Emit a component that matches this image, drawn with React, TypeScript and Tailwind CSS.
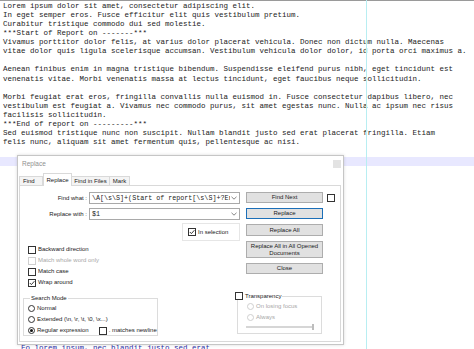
import React from "react";

const lines: string[] = [
  "Lorem ipsum dolor sit amet, consectetur adipiscing elit.",
  "In eget semper eros. Fusce efficitur elit quis vestibulum pretium.",
  "Curabitur tristique commodo dui sed molestie.",
  "***Start of Report on -------***",
  "Vivamus porttitor dolor felis, at varius dolor placerat vehicula. Donec non dictum nulla. Maecenas",
  "vitae dolor quis ligula scelerisque accumsan. Vestibulum vehicula dolor dolor, id porta orci maximus a.",
  "",
  "Aenean finibus enim in magna tristique bibendum. Suspendisse eleifend purus nibh, eget tincidunt est",
  "venenatis vitae. Morbi venenatis massa at lectus tincidunt, eget faucibus neque sollicitudin.",
  "",
  "Morbi feugiat erat eros, fringilla convallis nulla euismod in. Fusce consectetur dapibus libero, nec",
  "vestibulum est feugiat a. Vivamus nec commodo purus, sit amet egestas nunc. Nulla ac ipsum nec risus",
  "facilisis sollicitudin.",
  "***End of report on ---------***",
  "Sed euismod tristique nunc non suscipit. Nullam blandit justo sed erat placerat fringilla. Etiam",
  "felis nunc, aliquam sit amet fermentum quis, pellentesque ac nisi.",
  "",
];

function Check({ checked, disabled }: { checked?: boolean; disabled?: boolean }) {
  return (
    <span
      className={`w-[8px] h-[8px] shrink-0 border bg-white flex items-center justify-center ${
        disabled ? "border-[#cfcfcf]" : "border-[#333333]"
      }`}
    >
      {checked && (
        <svg width="6" height="6" viewBox="0 0 6 6">
          <polyline points="0.8,3 2.4,4.6 5.4,1.2" fill="none" stroke="#222" strokeWidth="0.9" />
        </svg>
      )}
    </span>
  );
}

function Radio({ on, disabled }: { on?: boolean; disabled?: boolean }) {
  return (
    <span
      className={`w-[7px] h-[7px] shrink-0 rounded-full border bg-white flex items-center justify-center ${
        disabled ? "border-[#cfcfcf]" : "border-[#333333]"
      }`}
    >
      {on && <span className="w-[3px] h-[3px] rounded-full bg-[#111]" />}
    </span>
  );
}

function Btn({ label, h, focused }: { label: React.ReactNode; h: string; focused?: boolean }) {
  return (
    <div
      className={`ml-[6px] w-[77px] ${h} bg-[#e1e1e1] border flex items-center justify-center text-center leading-[7px] ${
        focused ? "border-[#1c6fb8]" : "border-[#adadad]"
      }`}
    >
      {label}
    </div>
  );
}

function Combo({ value }: { value: string }) {
  return (
    <div className="ml-[2px] w-[151px] h-[12px] border border-[#a9a9a9] bg-white flex items-center">
      <span className="flex-1 overflow-hidden whitespace-pre pl-[2px] font-['Liberation_Mono',monospace] text-[6.7px] text-[#222]">
        {value}
      </span>
      <svg width="8" height="6" viewBox="0 0 8 6" className="shrink-0 mr-[1px]">
        <polyline points="1.5,1.8 4,4.2 6.5,1.8" fill="none" stroke="#666" strokeWidth="0.8" />
      </svg>
    </div>
  );
}

export default function App() {
  return (
    <div className="relative w-[474px] h-[349px] overflow-hidden bg-white">
      {/* editor */}
      <div className="border-t border-[#9a9a9a] pt-[0.5px] font-['Liberation_Mono',monospace] text-[7.5px] leading-[9.13px] text-[#1c1c1c]">
        {lines.map((l, i) => (
          <div key={i} className="pl-[3px] whitespace-pre h-[9.13px]">
            {l}
          </div>
        ))}
        <div className="h-[9.13px] bg-[#e8e8ff]" />
        {Array.from({ length: 19 }).map((_, i) => (
          <div key={"b" + i} className="h-[9.13px]" />
        ))}
        <div className="mt-[5px] pl-[3px] whitespace-pre h-[9.13px] text-[#2b2ba6]">
          {"    Fo lorem ipsum, nec blandit justo sed erat"}
        </div>
      </div>

      {/* long line marker */}
      <div className="absolute left-[366px] top-0 bottom-0 w-px bg-[#b8eef2]" />

      {/* Replace dialog */}
      <div className="absolute left-[17px] top-[155px] w-[327px] h-[190px] bg-white border border-[#c6c6c6] shadow-[0_0_3px_rgba(0,0,0,0.15)] font-['Liberation_Sans',sans-serif] text-[6px] text-[#1a1a1a] flex flex-col">
        <div className="h-[16px] flex items-center justify-between pl-[4px] pr-[2px] shrink-0">
          <span className="text-[6.5px] text-[#8f8f8f]">Replace</span>
          <span className="w-[8px] h-[8px] bg-[#e3e3e3]" />
        </div>

        {/* tabs */}
        <div className="h-[13px] flex items-end ml-[1px] shrink-0">
          <div className="w-[24px] h-[9px] bg-[#f4f4f4] border border-b-0 border-[#d9d9d9] flex items-center pl-[3px]">
            Find
          </div>
          <div className="w-[29px] h-[13px] bg-white border border-b-0 border-[#d9d9d9] flex items-center justify-center relative top-px">
            Replace
          </div>
          <div className="w-[38px] h-[9px] bg-[#f4f4f4] border border-b-0 border-l-0 border-[#d9d9d9] flex items-center justify-center">
            Find in Files
          </div>
          <div className="w-[20px] h-[9px] bg-[#f4f4f4] border border-b-0 border-l-0 border-[#d9d9d9] flex items-center justify-center">
            Mark
          </div>
        </div>

        {/* panel */}
        <div className="ml-[1px] w-[322px] h-[157px] border border-[#d9d9d9] bg-white flex">
          {/* left column */}
          <div className="w-[220px] flex flex-col">
            <div className="mt-[6px] h-[12px] flex items-center">
              <span className="w-[67px] text-right">Find what :</span>
              <Combo value={"\\A[\\s\\S]+(Start of report[\\s\\S]+?Er"} />
            </div>
            <div className="mt-[4px] h-[12px] flex items-center">
              <span className="w-[67px] text-right">Replace with :</span>
              <Combo value="$1" />
            </div>
            <div className="mt-[3px] ml-[162px] w-[58px] h-[18px] border border-[#e6e6e6] flex items-center gap-[2px] pl-[5px]">
              <Check checked />
              <span>In selection</span>
            </div>

            <div className="mt-[3px] ml-[8px] flex flex-col">
              <div className="h-[11px] flex items-center gap-[2px]">
                <Check />
                <span>Backward direction</span>
              </div>
              <div className="h-[11px] flex items-center gap-[2px] text-[#a8a8a8]">
                <Check disabled />
                <span>Match whole word only</span>
              </div>
              <div className="h-[11px] flex items-center gap-[2px]">
                <Check />
                <span>Match case</span>
              </div>
              <div className="h-[11px] flex items-center gap-[2px]">
                <Check checked />
                <span>Wrap around</span>
              </div>
            </div>

            <fieldset className="mt-[6px] ml-[3px] w-[135px] h-[42px] border border-[#dcdcdc] pl-[4px]">
              <legend className="ml-[2px] px-[1px] h-[8px] leading-[8px]">Search Mode</legend>
              <div className="h-[11px] flex items-center gap-[2px] mt-[1px]">
                <Radio />
                <span>Normal</span>
              </div>
              <div className="h-[11px] flex items-center gap-[2px]">
                <Radio />
                <span>Extended (\n, \r, \t, \0, \x...)</span>
              </div>
              <div className="h-[11px] flex items-center gap-[2px]">
                <Radio on />
                <span>Regular expression</span>
                <span className="ml-[8px]">
                  <Check />
                </span>
                <span>. matches newline</span>
              </div>
            </fieldset>
          </div>

          {/* right column */}
          <div className="flex flex-col">
            <div className="mt-[6px] flex items-center">
              <Btn label="Find Next" h="h-[11px]" />
              <span className="ml-[4px]">
                <Check />
              </span>
            </div>
            <div className="mt-[5px]">
              <Btn label="Replace" h="h-[11px]" focused />
            </div>
            <div className="mt-[5px]">
              <Btn label="Replace All" h="h-[12px]" />
            </div>
            <div className="mt-[5px]">
              <Btn
                label={
                  <span>
                    Replace All in All Opened
                    <br />
                    Documents
                  </span>
                }
                h="h-[17px]"
              />
            </div>
            <div className="mt-[5px]">
              <Btn label="Close" h="h-[11px]" />
            </div>

            <fieldset className="mt-[18px] -ml-[3px] w-[85px] h-[42px] border border-[#dcdcdc] pl-[9px] text-[#a8a8a8]">
              <legend className="-ml-[12px] pr-[1px] h-[8px] flex items-center gap-[2px] text-[#1a1a1a]">
                <Check />
                <span>Transparency</span>
              </legend>
              <div className="h-[11px] flex items-center gap-[2px] mt-[1px]">
                <Radio disabled />
                <span>On losing focus</span>
              </div>
              <div className="h-[11px] flex items-center gap-[2px]">
                <Radio disabled />
                <span>Always</span>
              </div>
              <div className="h-[8px] flex items-center -ml-[1px] w-[68px]">
                <div className="flex-1 h-[2px] bg-[#d6d6d6]" />
                <div className="w-[2px] h-[6px] bg-[#bdbdbd]" />
              </div>
            </fieldset>
          </div>
        </div>
      </div>
    </div>
  );
}
